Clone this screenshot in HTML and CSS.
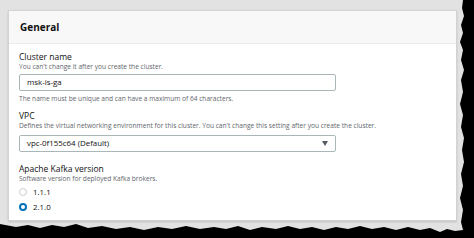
FILE: index.html
```html
<!DOCTYPE html>
<html lang="en">
<head>
  <meta charset="UTF-8">
  <meta name="viewport" content="width=device-width, initial-scale=1.0">
  <title>General</title>
  <link rel="stylesheet" href="styles.css">
</head>
<body>
  <div class="paper">
    <div class="card">
      <div class="card-header">General</div>
      <div class="card-body">
        <div class="field">
          <div class="label">Cluster name</div>
          <div class="desc">You can't change it after you create the cluster.</div>
          <div class="input">msk-is-ga</div>
          <div class="hint">The name must be unique and can have a maximum of 64 characters.</div>
        </div>
        <div class="field">
          <div class="label">VPC</div>
          <div class="desc">Defines the virtual networking environment for this cluster. You can't change this setting after you create the cluster.</div>
          <div class="input select">
            <span>vpc-0f155c64 (Default)</span>
            <span class="caret"></span>
          </div>
        </div>
        <div class="field kafka">
          <div class="label">Apache Kafka version</div>
          <div class="desc">Software version for deployed Kafka brokers.</div>
          <div class="radio-row"><span class="radio"></span>1.1.1</div>
          <div class="radio-row"><span class="radio checked"></span>2.1.0</div>
        </div>
      </div>
    </div>
  </div>
</body>
</html>
```

FILE: styles.css
```css
body {
  margin: 0;
  width: 474px;
  height: 238px;
  overflow: hidden;
  background-color: #000;
  font-family: "Open Sans", Arial, sans-serif;
  color: #111;
}
.paper {
  height: 238px;
  padding: 10px 0 0 8px;
  box-sizing: border-box;
  background-color: #e2e2e2;
  clip-path: polygon(0 0, 463px 0, 462px 8px, 464px 16px, 461px 25px, 463px 33px, 460px 42px, 463px 50px, 461px 60px, 464px 70px, 461px 80px, 463px 92px, 460px 104px, 463px 115px, 461px 127px, 464px 138px, 462px 150px, 464px 162px, 461px 174px, 463px 186px, 460px 198px, 463px 210px, 461px 222px, 463px 230px, 455px 231px, 447px 229px, 440px 232px, 430px 228px, 420px 230px, 408px 227px, 396px 230px, 384px 227px, 372px 229px, 360px 226px, 348px 229px, 336px 227px, 324px 230px, 312px 227px, 300px 229px, 288px 226px, 276px 229px, 262px 227px, 250px 230px, 238px 226px, 226px 229px, 214px 227px, 200px 229px, 186px 226px, 172px 229px, 158px 227px, 144px 230px, 130px 227px, 116px 229px, 102px 226px, 88px 228px, 76px 224px, 64px 227px, 52px 225px, 40px 228px, 28px 225px, 16px 227px, 0 224px);
}
.card {
  width: 449px;
  height: 211px;
  box-sizing: border-box;
  background-color: #fff;
  border: 1px solid #d0d4d4;
  box-shadow: 0 1px 2px rgba(0, 0, 0, 0.15);
}
.card-header {
  height: 33px;
  box-sizing: border-box;
  padding-left: 11px;
  line-height: 33px;
  font-size: 10px;
  font-weight: bold;
  background-color: #f8f8f8;
  border-bottom: 1px solid #eaeded;
}
.card-body {
  padding: 7px 10px 0;
}
.label {
  font-size: 8.5px;
  line-height: 11px;
}
.desc,
.hint {
  font-size: 6.6px;
  line-height: 10px;
  color: #5f666d;
}
.input {
  width: 317px;
  height: 17px;
  box-sizing: border-box;
  margin-top: 2px;
  padding-left: 7px;
  border: 1px solid #aab7b8;
  border-radius: 2px;
  font-size: 7.9px;
  line-height: 15px;
}
.hint {
  margin-top: 3px;
}
.field + .field {
  margin-top: 6px;
}
.select {
  display: flex;
  justify-content: space-between;
  align-items: center;
  margin-top: 4px;
  padding-right: 7px;
}
.caret {
  width: 0;
  height: 0;
  border-left: 3.5px solid transparent;
  border-right: 3.5px solid transparent;
  border-top: 5px solid #545b64;
}
.field.kafka {
  margin-top: 11px;
}
.radio-row {
  display: flex;
  align-items: center;
  height: 15px;
  font-size: 7.9px;
}
.radio-row:first-of-type {
  margin-top: -1px;
}
.radio {
  width: 8px;
  height: 8px;
  box-sizing: border-box;
  margin-right: 6px;
  border: 1px solid #c8cdcd;
  border-radius: 50%;
}
.radio.checked {
  border: 2.5px solid #0073bb;
}
```
